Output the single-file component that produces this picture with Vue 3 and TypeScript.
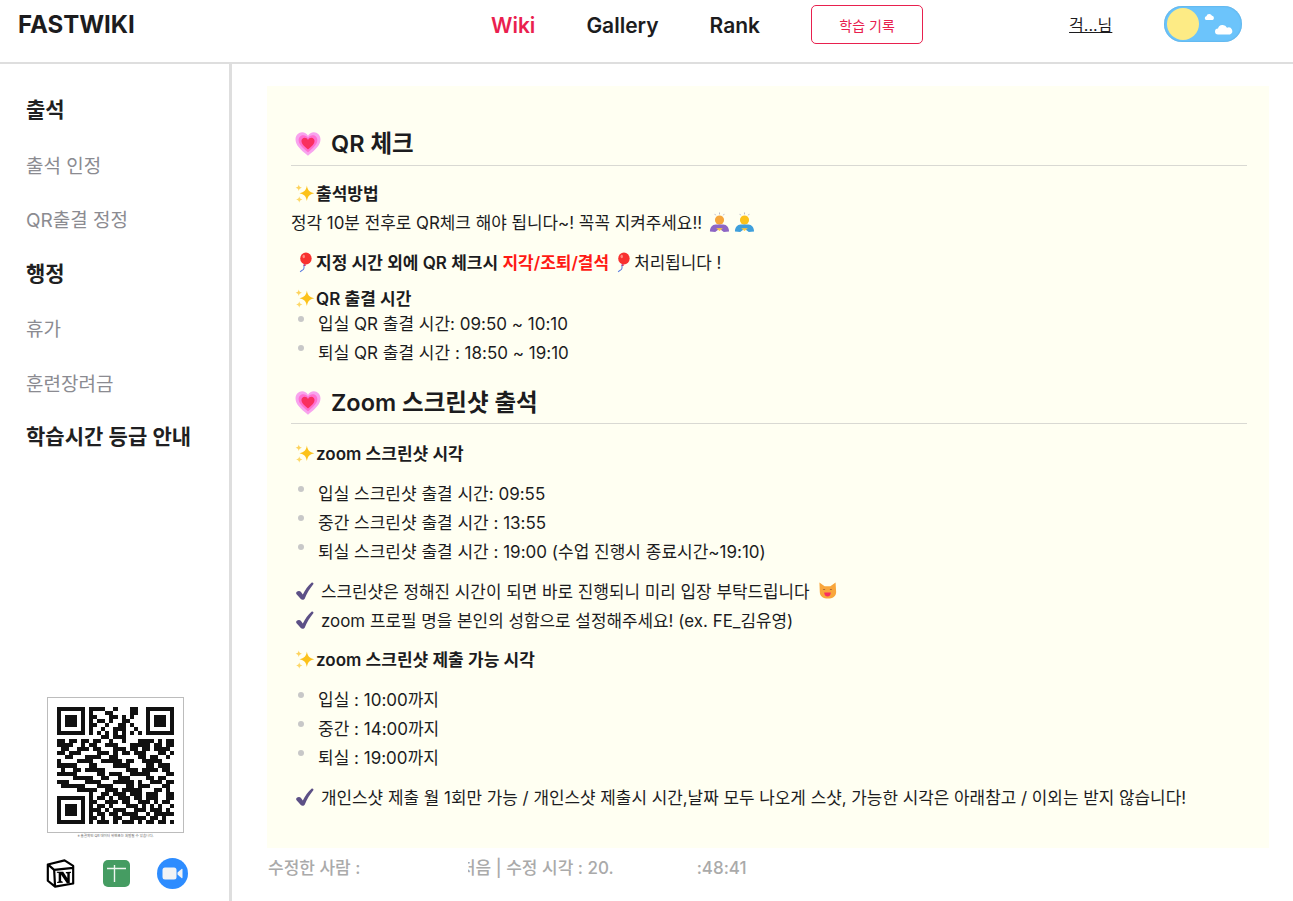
<script setup lang="ts">
const finder = ["1111111", "1000001", "1011101", "1011101", "1011101", "1000001", "1111111"];

const topBits = [
  "1111001000110",
  "1000110000110",
  "1100011010100",
  "1011010011000",
  "1100100110100",
  "1001001110010",
  "1010101010101",
];
const midRows = [
  "00000000000110111000000000000",
  "11011011011001001000111101011",
  "11110010110011100011111011011",
  "01100111011000111011011011110",
  "11011100001110101101110001101",
  "00110001111001100000110110010",
  "10000111100111110110011111000",
  "11111000110000111100001101110",
  "01001101111100000111011110110",
  "11111000001101110011111000011",
  "00001111100110011100001101100",
  "11100001111000111110100111011",
  "01111110001111000110111000110",
  "00000111110011101111100011010",
  "00000000100110111011101110011",
];
const bottomBits = [
  "101101011101101110011",
  "110011101100111010110",
  "101101000111010101001",
  "111010111001110111010",
  "101101101111001011111",
  "110100110011110110100",
  "101110101110101101101",
];

const rows: string[] = [
  ...finder.map((f, i) => f + "0" + topBits[i] + "0" + f),
  ...midRows,
  ...finder.map((f, i) => f + "0" + bottomBits[i]),
];

const cells: { x: number; y: number }[] = [];
rows.forEach((row, y) => {
  row.split("").forEach((bit, x) => {
    if (bit === "1") cells.push({ x, y });
  });
});

const menu = [
  { label: "출석", head: true },
  { label: "출석 인정", head: false },
  { label: "QR출결 정정", head: false },
  { label: "행정", head: true },
  { label: "휴가", head: false },
  { label: "훈련장려금", head: false },
  { label: "학습시간 등급 안내", head: true },
];

const qrTimes = ["입실 QR 출결 시간: 09:50 ~ 10:10", "퇴실 QR 출결 시간 : 18:50 ~ 19:10"];
const shotTimes = [
  "입실 스크린샷 출결 시간: 09:55",
  "중간 스크린샷 출결 시간 : 13:55",
  "퇴실 스크린샷 출결 시간 : 19:00 (수업 진행시 종료시간~19:10)",
];
const dueTimes = ["입실 : 10:00까지", "중간 : 14:00까지", "퇴실 : 19:00까지"];
</script>

<template>
  <svg class="defs" aria-hidden="true">
    <symbol id="heart" viewBox="0.500 1.500 25 23.500">
      <path fill="#f8a3ee" d="M13 24.500C5 18.500 1 14 1 8.800 1 4.800 4 2 7.400 2c2.400 0 4.400 1.200 5.600 3.200C14.200 3.200 16.200 2 18.600 2 22 2 25 4.800 25 8.800c0 5.200-4 9.700-12 15.700z" />
      <path fill="#ff6fd0" d="M13 21.200C7 16.700 4 13.300 4 9.500 4 6.700 6.100 4.800 8.500 4.800c1.900 0 3.500 1 4.500 2.700 1-1.700 2.600-2.700 4.500-2.700 2.400 0 4.500 1.900 4.500 4.700 0 3.800-3 7.200-9 11.700z" />
      <path fill="#f92f60" d="M13 18.500c-4.200-3.200-6.300-5.500-6.300-8.100 0-1.900 1.500-3.200 3-3.200 1.500 0 2.600.8 3.300 2.200.7-1.400 1.800-2.200 3.300-2.200 1.500 0 3 1.300 3 3.200 0 2.600-2.100 4.900-6.300 8.100z" />
    </symbol>
    <symbol id="sparkle" viewBox="0 0 22 22">
      <path fill="#fcc21b" d="M13.500 2.500c.8 5 2.600 7 7.800 8.200-5.200 1.200-7 3.200-7.800 8.200-.8-5-2.600-7-7.800-8.200 5.200-1.200 7-3.200 7.800-8.200z" />
      <path fill="#fdd35c" d="M5 1.500c.4 2 1.200 2.900 3.300 3.400C6.200 5.400 5.400 6.300 5 8.300 4.600 6.300 3.800 5.400 1.700 4.900 3.800 4.400 4.600 3.500 5 1.500z" />
      <path fill="#fdd868" d="M5.500 14c.4 2 1.200 2.900 3.300 3.400-2.100.5-2.900 1.400-3.300 3.400-.4-2-1.200-2.900-3.300-3.400 2.100-.5 2.900-1.400 3.300-3.400z" />
    </symbol>
    <symbol id="balloon" viewBox="0 0 20 22">
      <path fill="none" stroke="#5a7be0" stroke-width="1.100" d="M9.500 13c-.5 2.500.8 3-.5 5-.8 1.200-2.500 1.200-3.500 3" />
      <ellipse cx="11.500" cy="6.800" rx="6" ry="6.300" fill="#f8312f" />
      <path fill="#ca0b4a" d="M10 12.800l-1.200 1.500h2.600L11 12.800z" />
      <ellipse cx="9.200" cy="4.800" rx="1.300" ry="1.800" fill="#ff8a80" />
    </symbol>
    <symbol id="bow-purple" viewBox="0 0 22 22">
      <g stroke="#b7b7c9" stroke-width="1"><path d="M6 2 7 3.500M11 .5v2M16 2 15 3.500" /></g>
      <circle cx="11" cy="8.500" r="4.800" fill="#f6a63c" />
      <path fill="#8d65c5" d="M1 20.500c0-4.500 2.500-7.500 6-7.500h8c3.500 0 6 3 6 7.500l-5.500.5L11 17.500 6.500 21z" />
      <path fill="#ffc83d" d="M7.500 17h7L11 20z" />
    </symbol>
    <symbol id="bow-blue" viewBox="0 0 22 22">
      <g stroke="#b7b7c9" stroke-width="1"><path d="M6 2 7 3.500M11 .5v2M16 2 15 3.500" /></g>
      <circle cx="11" cy="8.500" r="4.800" fill="#fcc21b" />
      <path fill="#3f9fdc" d="M1 20.500c0-4.500 2.500-7.500 6-7.500h8c3.500 0 6 3 6 7.500l-5.500.5L11 17.500 6.500 21z" />
      <path fill="#ffc83d" d="M7.500 17h7L11 20z" />
    </symbol>
    <symbol id="cat" viewBox="0 0 20 20">
      <path fill="#f9a63c" d="M1.500 1.500l5.500 4h6l5.500-4 .6 10c0 4.600-3.900 7-8.600 7s-8.600-2.400-8.600-7z" />
      <path fill="#7d4533" d="M5 9.500c.6-1.200 2.200-1.200 2.800 0zM12.200 9.500c.6-1.200 2.200-1.200 2.800 0z" />
      <path fill="#f92f60" d="M6.500 12h7c0 2.400-1.500 4.400-3.500 4.400S6.500 14.400 6.500 12z" />
    </symbol>
    <symbol id="check" viewBox="0 0 20 20">
      <path fill="#5c5086" d="M1.500 11C3 9.500 5 9.500 6 11l1.800 2.500C10 9 13 5 16.500 1.800c1-.8 2.500.2 1.800 1.500C15 7.500 12 12 9.800 17.500c-.6 1.500-3 1.800-4 .5l-4-4.500c-.8-.7-.8-1.700-.3-2.500z" />
    </symbol>
  </svg>

  <div class="page">
    <header class="topbar">
      <a class="logo">FASTWIKI</a>
      <nav class="main-nav">
        <a class="active">Wiki</a>
        <a>Gallery</a>
        <a>Rank</a>
      </nav>
      <button class="record-btn" type="button">학습 기록</button>
      <a class="user">걱...님</a>
      <div class="theme-toggle">
        <span class="sun"></span>
        <svg class="clouds" width="44" height="30" viewBox="0 0 44 30">
          <path fill="#fff" d="M8 9a2 2 0 0 1 .4-3.800 3 3 0 0 1 5.600-.4 2.200 2.200 0 0 1 .6 4.200z" />
          <path fill="#fff" d="M20 23.500a3 3 0 0 1 0-6 4.800 4.800 0 0 1 9-.8 3.500 3.500 0 0 1 3 6.800z" />
        </svg>
      </div>
    </header>

    <div class="body">
      <aside class="sidebar">
        <ul class="side-menu">
          <li v-for="item in menu" :key="item.label" :class="{ head: item.head }">{{ item.label }}</li>
        </ul>

        <div class="side-bottom">
          <div class="qr-box">
            <svg class="qr" viewBox="0 0 29 29" width="117" height="117" shape-rendering="crispEdges">
              <rect v-for="c in cells" :key="c.x + '-' + c.y" :x="c.x" :y="c.y" width="1" height="1" fill="#111" />
            </svg>
          </div>
          <p class="qr-note">※ 출결확인 QR 데이터 위변조는 처벌될 수 있습니다.</p>
          <div class="links">
            <svg width="29" height="29" viewBox="0 0 31 32">
              <path fill="#fff" d="M1.500 6 20 1.500 29.500 7.500V27L9.500 30.500 1.500 24z" />
              <path fill="none" stroke="#000" stroke-width="2.400" stroke-linejoin="round" d="M1.500 6 20 1.500 29.500 7.500V27L9.500 30.500 1.500 24zM1.500 6 8.500 12 29.500 9.800M8.500 12 9.500 30.500" />
              <path fill="#000" d="M11.500 14h7l4.500 7v-5l-1.600-.4v-1.200l5.700-.3v1.100l-1.400.4v11l-3 .3-6.500-9.500v7l1.800.6v1.100l-6.200.4v-1.200l1.700-.4v-9.400l-2-.3z" />
            </svg>
            <svg width="27" height="27" viewBox="0 0 27 27">
              <rect width="27" height="27" rx="5" fill="#459c62" />
              <path fill="none" stroke="#eef5f0" stroke-width="1.400" d="M4 8.500h19M11.500 5v17" />
            </svg>
            <svg width="31" height="31" viewBox="0 0 31 31">
              <circle cx="15.500" cy="15.500" r="15.500" fill="#2d8cff" />
              <rect x="5.500" y="9.500" width="14" height="12" rx="2.500" fill="#f0f2f5" />
              <path fill="#f0f2f5" d="M20.500 14.500l4-3.500c.6-.4 1-.2 1 .5v8c0 .7-.4.900-1 .5l-4-3.500z" />
            </svg>
          </div>
        </div>
      </aside>

      <main class="content">
        <article class="card">
          <h2>
            <svg class="h-emoji"><use href="#heart" /></svg>
            QR 체크
          </h2>
          <p class="p-method">
            <span class="bold"><svg class="emoji"><use href="#sparkle" /></svg>출석방법</span><br />
            정각 10분 전후로 QR체크 해야 됩니다~! 꼭꼭 지켜주세요!!
            <svg class="emoji face"><use href="#bow-purple" /></svg>
            <svg class="emoji face"><use href="#bow-blue" /></svg>
          </p>
          <p class="p-warn">
            <span class="bold"><svg class="emoji"><use href="#balloon" /></svg>지정 시간 외에 QR 체크시 <span class="red">지각/조퇴/결석</span></span>
            <svg class="emoji"><use href="#balloon" /></svg>처리됩니다 !
          </p>
          <p class="p-sub bold"><svg class="emoji"><use href="#sparkle" /></svg>QR 출결 시간</p>
          <ul class="dots">
            <li v-for="t in qrTimes" :key="t">{{ t }}</li>
          </ul>

          <h2 class="second">
            <svg class="h-emoji"><use href="#heart" /></svg>
            Zoom 스크린샷 출석
          </h2>
          <p class="p-zoom bold"><svg class="emoji"><use href="#sparkle" /></svg>zoom 스크린샷 시각</p>
          <ul class="dots after-sub">
            <li v-for="t in shotTimes" :key="t">{{ t }}</li>
          </ul>
          <div class="checks">
            <div class="check-row">
              <svg class="check"><use href="#check" /></svg>
              <span>스크린샷은 정해진 시간이 되면 바로 진행되니 미리 입장 부탁드립니다</span>
              <svg class="emoji face"><use href="#cat" /></svg>
            </div>
            <div class="check-row">
              <svg class="check"><use href="#check" /></svg>
              <span>zoom 프로필 명을 본인의 성함으로 설정해주세요! (ex. FE_김유영)</span>
            </div>
          </div>
          <p class="p-due bold"><svg class="emoji"><use href="#sparkle" /></svg>zoom 스크린샷 제출 가능 시각</p>
          <ul class="dots after-due">
            <li v-for="t in dueTimes" :key="t">{{ t }}</li>
          </ul>
          <div class="check-row last">
            <svg class="check"><use href="#check" /></svg>
            <span>개인스샷 제출 월 1회만 가능 / 개인스샷 제출시 시간,날짜 모두 나오게 스샷, 가능한 시각은 아래참고 / 이외는 받지 않습니다!</span>
          </div>
        </article>

        <footer class="modified">
          수정한 사람 : <span class="gap gap-a"></span>처음 | 수정 시각 : 20.<span class="gap gap-b"></span>:48:41
        </footer>
      </main>
    </div>
  </div>
</template>

<style>
html,
body {
  margin: 0;
  background: #fff;
}
</style>

<style scoped>
.defs {
  position: absolute;
  width: 0;
  height: 0;
}

.page {
  height: 901px;
  display: flex;
  flex-direction: column;
  overflow: hidden;
  color: #1c1c1e;
  font-family: Inter, "Noto Sans CJK KR", sans-serif;
}

.topbar {
  height: 62px;
  flex: none;
  display: flex;
  align-items: flex-start;
  padding-left: 18px;
  border-bottom: 2px solid #dedede;
}

.logo {
  font-size: 24px;
  font-weight: 700;
  line-height: 50px;
  width: 116px;
}

.main-nav {
  display: flex;
  gap: 51px;
  margin-left: 357px;
  font-size: 21px;
  font-weight: 600;
  line-height: 51px;
}

.main-nav .active {
  color: #ea1f4f;
}

.record-btn {
  width: 112px;
  height: 39px;
  margin: 5px 0 0 51px;
  padding: 0;
  border: 1px solid #e8204e;
  border-radius: 5px;
  background: #fff;
  color: #e8204e;
  font-family: inherit;
  font-size: 14px;
}

.user {
  margin-left: 146px;
  width: 43px;
  font-size: 16px;
  line-height: 50px;
  text-decoration: underline;
  white-space: nowrap;
}

.theme-toggle {
  position: relative;
  width: 78px;
  height: 36px;
  margin: 6px 0 0 52px;
  border-radius: 18px;
  background: #6cc4fb;
  box-shadow: inset 0 0 2px #4c9fd6;
}

.sun {
  position: absolute;
  left: 3px;
  top: 2px;
  width: 32px;
  height: 32px;
  border-radius: 50%;
  background: #fdeb85;
}

.clouds {
  position: absolute;
  left: 34px;
  top: 5px;
}

.body {
  flex: 1;
  display: flex;
  min-height: 0;
}

.sidebar {
  width: 229px;
  flex: none;
  display: flex;
  flex-direction: column;
  border-right: 3px solid #dedede;
}

.side-menu {
  list-style: none;
  margin: 0;
  padding: 19px 0 0 26px;
  font-size: 19px;
  color: #8b8b91;
}

.side-menu li {
  height: 54.5px;
  line-height: 58.5px;
}

.side-menu .head {
  font-size: 21px;
  font-weight: 600;
  line-height: 54.5px;
  color: #1f1f22;
}

.side-bottom {
  margin-top: auto;
  padding: 0 0 12px 46px;
}

.qr-box {
  width: 137px;
  height: 136px;
  box-sizing: border-box;
  margin-left: 1px;
  border: 1px solid #bcbcbc;
  display: flex;
  align-items: center;
  justify-content: center;
}

.qr {
  filter: blur(0.35px);
}

.qr-note {
  width: 139px;
  margin: 0;
  height: 7px;
  line-height: 7px;
  text-align: center;
  font-size: 3.500px;
  color: #666;
  white-space: nowrap;
}

.links {
  display: flex;
  align-items: center;
  justify-content: space-between;
  width: 142px;
  margin-top: 18px;
}

.content {
  flex: 1;
  min-width: 0;
  padding: 22px 24px 0 35px;
}

.card {
  height: 762px;
  box-sizing: border-box;
  padding: 40px 22px 0 24px;
  background: #fffff2;
  font-size: 16.9px;
}

h2 {
  display: flex;
  align-items: center;
  margin: 0;
  height: 32px;
  padding: 2px 0 5px 4px;
  border-bottom: 1px solid #d9d9d3;
  font-size: 23.5px;
  font-weight: 600;
  line-height: 32px;
}

h2.second {
  margin-top: 16px;
  height: 30px;
  padding-top: 4px;
}

.h-emoji {
  width: 26px;
  height: 26px;
  margin-right: 10px;
  flex: none;
}

p {
  margin: 0;
  line-height: 29px;
}

.bold {
  font-size: 17px;
  font-weight: 600;
}

.red {
  color: #ff1a14;
}

.emoji {
  width: 21px;
  height: 21px;
  vertical-align: -4px;
  margin-left: 3px;
  margin-right: 1px;
}

.emoji.face {
  margin-left: 2px;
  margin-right: 2px;
}

.check-row .emoji.face {
  margin-left: 2px;
  width: 19px;
  height: 19px;
}

.p-method {
  margin-top: 14px;
}

.p-warn {
  margin-top: 11px;
}

.p-sub {
  margin-top: 10px;
  line-height: 22px;
}

.p-zoom {
  margin-top: 16px;
}

.p-due {
  margin-top: 12px;
}

.dots {
  list-style: none;
  margin: 0;
  padding: 0 0 0 27px;
  font-size: 17px;
}

.dots li {
  position: relative;
  line-height: 29px;
}

.dots li::before {
  content: "";
  position: absolute;
  left: -20px;
  top: 6px;
  width: 6px;
  height: 6px;
  border-radius: 50%;
  background: #c8c8c8;
}

.after-sub {
  margin-top: 11px;
}

.after-due {
  margin-top: 11px;
}

.checks {
  margin-top: 9px;
}

.check-row {
  display: flex;
  align-items: center;
  gap: 6px;
  height: 29px;
  padding-left: 4px;
}

.check-row.last {
  margin-top: 9px;
}

.check {
  width: 20px;
  height: 20px;
  flex: none;
}

.modified {
  padding-left: 1px;
  line-height: 40px;
  font-size: 17px;
  font-weight: 500;
  color: #aaa;
  white-space: nowrap;
}

.gap {
  display: inline-block;
  position: relative;
  height: 30px;
  vertical-align: middle;
  background: #fff;
}

.gap-a {
  width: 103px;
  margin-right: -8px;
}

.gap-b {
  width: 83px;
}
</style>
